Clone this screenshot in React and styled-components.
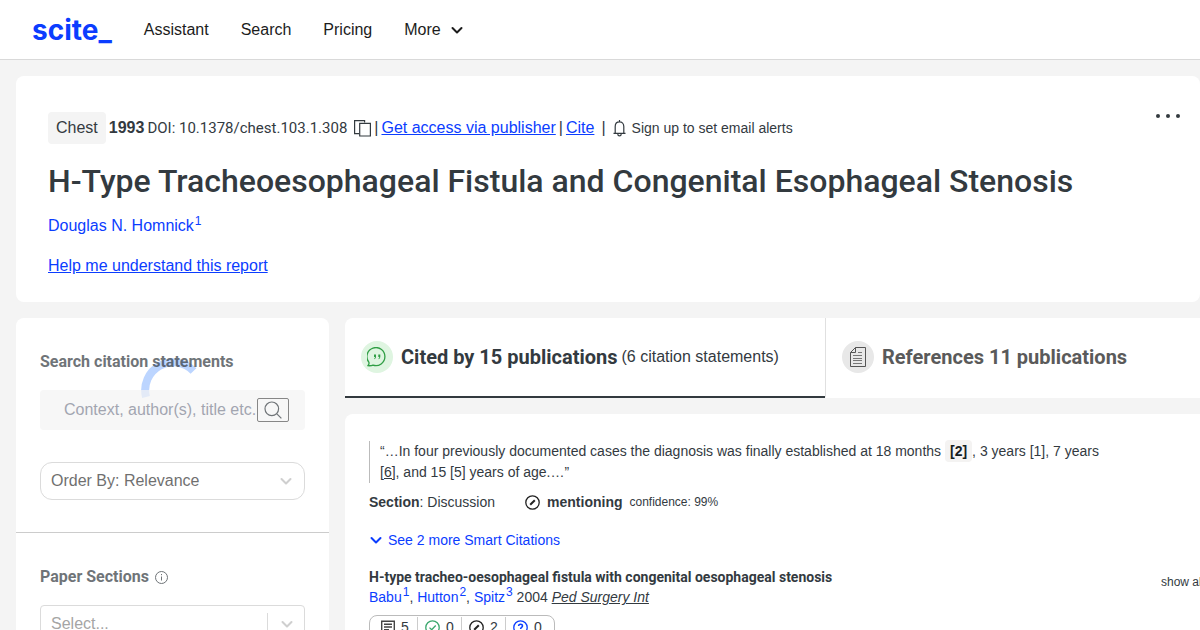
import React from 'react';
import styled, { createGlobalStyle } from 'styled-components';

const tallies = [
  { kind: 'total', count: 5 },
  { kind: 'supporting', count: 0 },
  { kind: 'mentioning', count: 2 },
  { kind: 'unclassified', count: 0 },
];

const authors = ['Babu', 'Hutton', 'Spitz'];

function Chevron({ color = 'currentColor' }) {
  return (
    <svg width="14" height="14" viewBox="0 0 14 14" fill="none" stroke={color} strokeWidth="2" strokeLinecap="round" strokeLinejoin="round" aria-hidden="true">
      <path d="M2.5 5 7 9.500 11.500 5" />
    </svg>
  );
}

function CopyIcon() {
  return (
    <svg width="17" height="17" viewBox="0 0 17 17" fill="none" stroke="#333a3f" strokeWidth="1.2" aria-hidden="true">
      <path d="M5 13.600H.6V.6h10v2" />
      <path d="M5.700 3.400h10.700v12.600H5.700z" />
    </svg>
  );
}

function BellIcon() {
  return (
    <svg width="13" height="17" viewBox="0 0 13 17" fill="none" stroke="#333a3f" strokeWidth="1.2" aria-hidden="true">
      <path d="M6.500 0v1.800M.5 13.400h12M2.200 13.400V6.500C2.200 3.700 4 1.900 6.500 1.900s4.300 1.800 4.300 4.600v6.900M4.800 14c0 2.600 3.400 2.600 3.400 0" />
    </svg>
  );
}

function QuoteIcon() {
  return (
    <svg width="20" height="20" viewBox="0 0 20 20" fill="none" stroke="#2f9e44" strokeWidth="1.3" strokeLinejoin="round" aria-hidden="true">
      <path d="M.8 18.700c1.200-1 1.600-2 1-3.600A9 9 0 1 1 6 18.100c-1.500.8-3.200.7-5.200.6z" />
      <path d="M7 7.500h2v2.200c0 1.200-.6 2-1.600 2.500l-.3-.5c.6-.4.9-.9.9-1.700H7zM11.300 7.500h2v2.200c0 1.200-.6 2-1.600 2.500l-.3-.5c.6-.4.9-.9.9-1.700h-1z" fill="#2f9e44" stroke="none" />
    </svg>
  );
}

function PaperIcon() {
  return (
    <svg width="16" height="20" viewBox="0 0 16 20" fill="none" stroke="#555" aria-hidden="true">
      <path d="M5.500.5h10v19H.5v-14z" />
      <path d="M5.500.5v5h-5" />
      <path d="M8 5.500h4M3 8.500h9M3 11.500h9M3 13.500h9M3 16.500h9" stroke="#777" />
    </svg>
  );
}

function TallyIcon({ kind }) {
  if (kind === 'total') {
    return (
      <svg width="14" height="14" viewBox="0 0 14 14" fill="none" stroke="#444" strokeWidth="1.4" aria-hidden="true">
        <path d="M.7 1.200h12.600v11.600H.7zM3 4.300h8M3 7h8M3 9.700h5" />
      </svg>
    );
  }
  const colors = { supporting: '#3aa76d', mentioning: '#222', unclassified: '#0b3dff' };
  return (
    <svg width="15" height="15" viewBox="0 0 15 15" fill="none" stroke={colors[kind]} strokeWidth="1.3" aria-hidden="true">
      <circle cx="7.5" cy="7.5" r="6.7" />
      {kind === 'supporting' && <path d="m4.500 7.600 2.200 2.200 4-4.300" />}
      {kind === 'mentioning' && <path d="m5.200 9.800 4.600-4.600" strokeWidth="2" />}
      {kind === 'unclassified' && (
        <path d="M5.600 6c0-2.400 3.900-2.400 3.900 0 0 1.400-1.900 1.300-1.900 2.900M7.600 10v1.400" strokeWidth="1.5" />
      )}
    </svg>
  );
}

export default function App() {
  return (
    <Page>
      <GlobalStyle />
      <Nav>
        <Logo href="#">scite_</Logo>
        <NavLink href="#">Assistant</NavLink>
        <NavLink href="#">Search</NavLink>
        <NavLink href="#">Pricing</NavLink>
        <NavButton>More <Chevron /></NavButton>
      </Nav>

      <PaperCard>
        <MetaRow>
          <Journal>Chest</Journal>
          <b>1993</b>
          <Doi>DOI: 10.1378/chest.103.1.308</Doi>
          <CopyButton aria-label="Copy DOI"><CopyIcon /></CopyButton>
          <span>|</span>
          <TextLink href="#">Get access via publisher</TextLink>
          <span>|</span>
          <TextLink href="#">Cite</TextLink>
          <AlertDivider>|</AlertDivider>
          <AlertButton><BellIcon /> Sign up to set email alerts</AlertButton>
        </MetaRow>
        <MenuButton aria-label="More options">
          <svg width="26" height="6" viewBox="0 0 26 6" fill="#333a3f" aria-hidden="true">
            <circle cx="3" cy="3" r="2" />
            <circle cx="13" cy="3" r="2" />
            <circle cx="23" cy="3" r="2" />
          </svg>
        </MenuButton>
        <Title>H-Type Tracheoesophageal Fistula and Congenital Esophageal Stenosis</Title>
        <Author href="#">Douglas N. Homnick<Sup>1</Sup></Author>
        <TextLink href="#">Help me understand this report</TextLink>
      </PaperCard>

      <Columns>
        <Sidebar>
          <Spinner width="64" height="64" viewBox="0 0 64 64" fill="none" stroke="#bcd5ff" strokeWidth="8" aria-hidden="true">
            <path d="M5 39A28 28 0 0 1 52.500 13" />
          </Spinner>
          <Filter>
            <FilterTitle as="label" htmlFor="statement-search">Search citation statements</FilterTitle>
            <SearchBox>
              <SearchInput id="statement-search" placeholder="Context, author(s), title etc." />
              <SearchButton aria-label="Search">
                <svg width="18" height="18" viewBox="0 0 18 18" fill="none" stroke="#333a3f" strokeWidth="1.2" aria-hidden="true">
                  <circle cx="7.8" cy="7.8" r="6.8" />
                  <path d="m12.600 12.600 4.800 4.800" />
                </svg>
              </SearchButton>
            </SearchBox>
            <SelectBox>
              <Select $round aria-label="Order by">
                <option>Order By: Relevance</option>
              </Select>
              <SelectArrow><Chevron color="#bbb" /></SelectArrow>
            </SelectBox>
          </Filter>
          <Divider />
          <Filter>
            <FilterTitle as="label" htmlFor="paper-sections">
              Paper Sections
              <svg width="13" height="13" viewBox="0 0 13 13" fill="none" stroke="#333a3f" aria-hidden="true">
                <circle cx="6.5" cy="6.5" r="6" />
                <path d="M6.500 5.500v4M6.500 3v1.200" />
              </svg>
            </FilterTitle>
            <SelectBox>
              <Select id="paper-sections" $muted>
                <option>Select...</option>
              </Select>
              <SelectArrow $divided><Chevron color="#bbb" /></SelectArrow>
            </SelectBox>
          </Filter>
        </Sidebar>

        <Main>
          <Tabs>
            <Tab $active>
              <TabIcon $active><QuoteIcon /></TabIcon>
              <TabTitle>Cited by 15 publications</TabTitle>
              <TabNote>(6 citation statements)</TabNote>
            </Tab>
            <Tab>
              <TabIcon><PaperIcon /></TabIcon>
              <TabTitle>References 11 publications</TabTitle>
            </Tab>
          </Tabs>

          <Results>
            <Quote>
              “…In four previously documented cases the diagnosis was finally established at 18 months{' '}
              <Mark>[2]</Mark>, 3 years [1], 7 years <u>[6]</u>, and 15 [5] years of age.…”
            </Quote>
            <Details>
              <span><b>Section</b>: Discussion</span>
              <Classification>
                <TallyIcon kind="mentioning" />
                <b>mentioning</b>
                <small>confidence: 99%</small>
              </Classification>
            </Details>
            <MoreButton><Chevron /> See 2 more Smart Citations</MoreButton>
            <Citation>
              <div>
                <CitationTitle>H-type tracheo-oesophageal fistula with congenital oesophageal stenosis</CitationTitle>
                <Byline>
                  {authors.map((name, index) => (
                    <React.Fragment key={name}>
                      {index > 0 && ', '}
                      <a href="#">{name}<Sup>{index + 1}</Sup></a>
                    </React.Fragment>
                  ))}
                  {' '}2004 <JournalLink href="#">Ped Surgery Int</JournalLink>
                </Byline>
              </div>
              <AbstractButton>show abstract</AbstractButton>
            </Citation>
            <Tally>
              {tallies.map(({ kind, count }) => (
                <TallyItem key={kind}><TallyIcon kind={kind} />{count}</TallyItem>
              ))}
            </Tally>
          </Results>
        </Main>
      </Columns>
    </Page>
  );
}

const headingFont = 'Roboto, "Liberation Sans", sans-serif';

const GlobalStyle = createGlobalStyle`
  * {
    box-sizing: border-box;
  }

  body {
    margin: 0;
    background: #f4f4f4;
    color: #333a3f;
    font-family: "Liberation Sans", Arial, sans-serif;
    font-size: 16px;
    line-height: 24px;
    overflow: hidden;
  }

  a {
    color: #0b3dff;
    text-decoration: none;
  }

  button, input, select {
    font: inherit;
    color: inherit;
  }

  button {
    background: none;
    border: none;
    padding: 0;
    cursor: pointer;
  }

  svg {
    flex: none;
    display: block;
  }
`;

const Page = styled.div`
  height: 100vh;
  overflow: hidden;
`;

const Nav = styled.nav`
  display: flex;
  align-items: center;
  gap: 32px;
  height: 60px;
  padding: 1px 32px 0;
  background: #fff;
  border-bottom: 1px solid #d9d9d9;
`;

const Logo = styled.a`
  font-family: Inter, sans-serif;
  font-size: 28px;
  font-weight: 700;
`;

const NavLink = styled.a`
  color: #1c1c1c;
`;

const NavButton = styled.button`
  display: flex;
  align-items: center;
  gap: 9px;
  color: #1c1c1c;
`;

const PaperCard = styled.header`
  position: relative;
  display: flex;
  flex-direction: column;
  align-items: flex-start;
  margin: 16px 0 16px 16px;
  padding: 36px 32px 24px;
  background: #fff;
  border-radius: 8px;
`;

const MetaRow = styled.div`
  display: flex;
  align-items: center;
  gap: 3px;
  white-space: nowrap;
`;

const Journal = styled.span`
  padding: 4px 8px;
  background: #f4f4f4;
  border-radius: 4px;
`;

const Doi = styled.span`
  font-family: ${headingFont};
  font-size: 15px;
`;

const CopyButton = styled.button`
  margin-left: 4px;
`;

const TextLink = styled.a`
  text-decoration: underline;
`;

const AlertDivider = styled.span`
  margin: 0 4px;
`;

const AlertButton = styled.button`
  display: flex;
  align-items: center;
  gap: 6px;
  font-size: 14px;
`;

const MenuButton = styled.button`
  position: absolute;
  top: 37px;
  right: 19px;
`;

const Title = styled.h1`
  margin: 16px 0 12px;
  font-family: ${headingFont};
  font-size: 32px;
  line-height: 42px;
  font-weight: 500;
  white-space: nowrap;
`;

const Author = styled.a`
  margin-bottom: 16px;
`;

const Sup = styled.sup`
  margin-left: 1px;
  font-size: 12px;
  line-height: 0;
`;

const Columns = styled.div`
  display: flex;
  align-items: flex-start;
  gap: 16px;
  padding-left: 16px;
`;

const Sidebar = styled.aside`
  position: relative;
  flex: 0 0 313px;
  min-width: 0;
  background: #fff;
  border-radius: 8px;
`;

// sits behind the dimmed filters while they load
const Spinner = styled.svg`
  position: absolute;
  top: 40px;
  left: 125px;
`;

const Filter = styled.div`
  position: relative;
  padding: 32px 24px;
  opacity: 0.7;
`;

const FilterTitle = styled.h2`
  display: flex;
  align-items: center;
  gap: 6px;
  margin: 0 0 16px;
  font-family: ${headingFont};
  font-weight: 700;
`;

const SearchBox = styled.div`
  display: flex;
  align-items: center;
  height: 40px;
  margin-bottom: 32px;
  padding: 0 16px 0 24px;
  background: #f4f4f4;
  border-radius: 4px;
`;

const SearchInput = styled.input`
  flex: 1;
  min-width: 0;
  padding: 0;
  background: none;
  border: none;
  outline: none;

  &::placeholder {
    color: #7b8090;
  }
`;

const SearchButton = styled.button`
  display: grid;
  place-items: center;
  width: 32px;
  height: 24px;
  border: 1px solid #555;
  border-radius: 2px;
`;

const SelectBox = styled.div`
  position: relative;
`;

const Select = styled.select`
  display: block;
  width: 100%;
  height: 38px;
  padding: 0 10px;
  appearance: none;
  background: transparent;
  border: 1px solid #ccc;
  border-radius: ${({ $round }) => ($round ? '12px' : '4px')};
  color: ${({ $muted }) => ($muted ? '#808080' : '#333')};
`;

const SelectArrow = styled.span`
  position: absolute;
  inset: 8px 0 8px auto;
  display: grid;
  place-items: center;
  width: 38px;
  border-left: ${({ $divided }) => ($divided ? '1px solid #ccc' : 'none')};
  pointer-events: none;
`;

const Divider = styled.hr`
  margin: 0;
  border: none;
  border-top: 1px solid #ccc;
`;

// wide panel, runs past the window edge on smaller screens
const Main = styled.main`
  flex: 1 0 960px;
`;

const Tabs = styled.div`
  display: grid;
  grid-template-columns: 1fr 1fr;
  margin-bottom: 16px;
  background: #fff;
  border-radius: 8px 8px 0 0;
`;

const Tab = styled.button`
  display: flex;
  align-items: center;
  height: 80px;
  padding: 0 16px;
  color: ${({ $active }) => ($active ? '#333a3f' : '#5a5a5a')};
  border-bottom: 2px solid ${({ $active }) => ($active ? '#333a3f' : 'transparent')};
  border-left: ${({ $active }) => ($active ? 'none' : '1px solid #e0e0e0')};
`;

const TabIcon = styled.span`
  display: grid;
  place-items: center;
  width: 32px;
  height: 32px;
  margin-right: 8px;
  background: ${({ $active }) => ($active ? '#dff5e1' : '#e8e8e8')};
  border-radius: 50%;
`;

const TabTitle = styled.span`
  font-family: ${headingFont};
  font-size: 20px;
  font-weight: 700;
`;

const TabNote = styled.span`
  margin-left: 4px;
`;

const Results = styled.section`
  padding: 27px 24px;
  background: #fff;
  border-radius: 8px;
  font-size: 14px;
  line-height: 20px;
`;

const Quote = styled.blockquote`
  max-width: 736px;
  margin: 0 0 9px;
  padding-left: 10px;
  border-left: 1px solid #bbb;
  line-height: 21px;
`;

const Mark = styled.b`
  padding: 3px 5px;
  background: #f4f3f2;
  border-radius: 4px;
  color: #14201f;
`;

const Details = styled.div`
  display: flex;
  gap: 30px;
  margin-bottom: 18px;
`;

const Classification = styled.span`
  display: flex;
  align-items: center;
  gap: 7px;

  small {
    font-size: 12px;
  }
`;

const MoreButton = styled.button`
  display: flex;
  align-items: center;
  gap: 5px;
  margin-bottom: 17px;
  color: #0b3dff;
`;

const Citation = styled.div`
  display: flex;
  align-items: center;
  justify-content: space-between;
  margin-bottom: 8px;
`;

const CitationTitle = styled.h3`
  margin: 0;
  font-family: ${headingFont};
  font-size: 14px;
  font-weight: 700;
`;

const Byline = styled.div`
  line-height: 20px;
`;

const JournalLink = styled.a`
  color: inherit;
  font-style: italic;
  text-decoration: underline;
`;

const AbstractButton = styled.button`
  width: 120px;
  padding-bottom: 10px;
  font-size: 12px;
  text-align: left;
`;

const Tally = styled.div`
  display: inline-flex;
  padding: 1px 5px 1px 3px;
  border: 1px solid #bbb;
  border-radius: 8px;
`;

const TallyItem = styled.span`
  display: flex;
  align-items: center;
  justify-content: center;
  gap: 6px;
  width: 44px;

  & + & {
    border-left: 1px solid #ccc;
  }
`;
